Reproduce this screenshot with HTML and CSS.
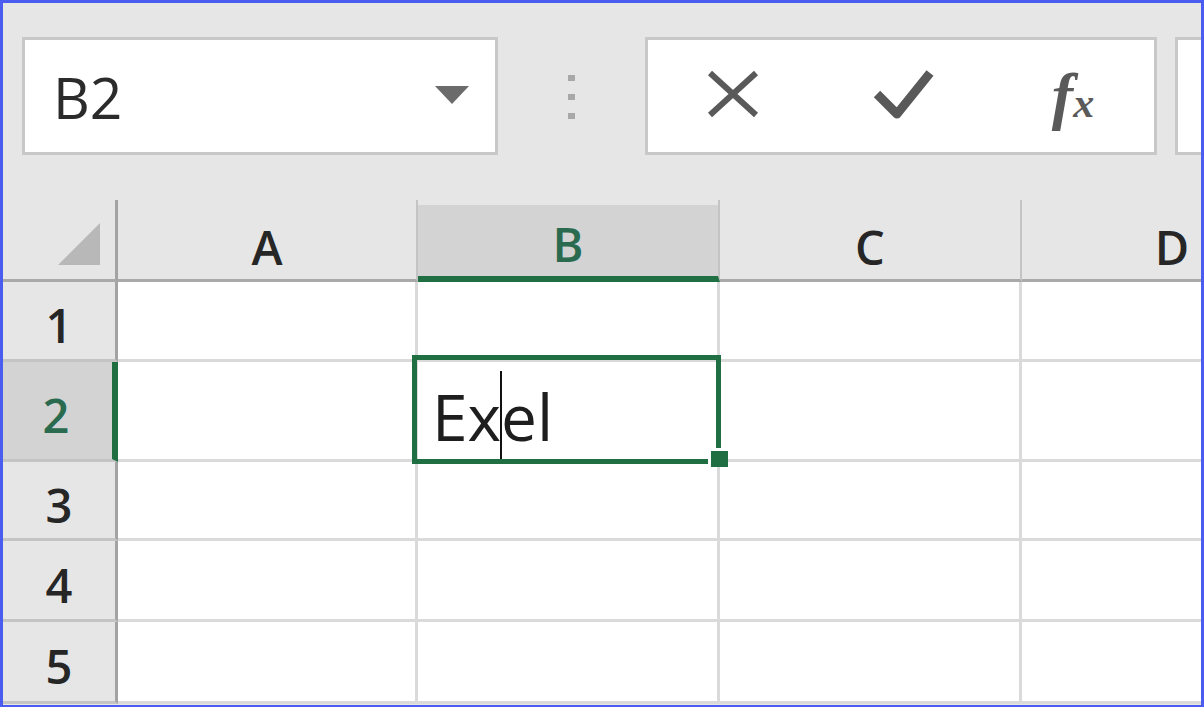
FILE: index.html
```html
<!DOCTYPE html>
<html>
<head>
<meta charset="utf-8">
<title>Excel</title>
<link rel="stylesheet" href="styles.css">
</head>
<body>
<div class="frame">
  <div class="toolbar">
    <div class="namebox">
      <span class="ref">B2</span>
      <svg class="dd" width="34" height="18" viewBox="0 0 34 18"><polygon points="0,0 34,0 17,18" fill="#6b6b6b"/></svg>
    </div>
    <div class="grip"><i></i><i></i><i></i></div>
    <div class="fbox">
      <span class="fbtn">
        <svg width="54" height="48" viewBox="0 0 54 48"><path d="M4 3 L50 45 M50 3 L4 45" stroke="#595959" stroke-width="6" fill="none"/></svg>
      </span>
      <span class="fbtn">
        <svg width="62" height="54" viewBox="0 0 62 54"><path d="M5 27 L25 47 L58 6" stroke="#595959" stroke-width="9" fill="none" stroke-linejoin="round"/></svg>
      </span>
      <span class="fbtn fx"><span class="f">f</span><span class="x">x</span></span>
    </div>
    <div class="input"></div>
  </div>
  <div class="sheet">
    <div class="corner"><svg width="42" height="42" viewBox="0 0 42 42"><polygon points="42,0 42,42 0,42" fill="#b8b8b8"/></svg></div>
    <div class="colh">A</div>
    <div class="colh sel">B</div>
    <div class="colh">C</div>
    <div class="colh">D</div>

    <div class="rowh">1</div>
    <div class="cell"></div><div class="cell"></div><div class="cell"></div><div class="cell"></div>

    <div class="rowh sel">2</div>
    <div class="cell"></div>
    <div class="cell active"><span class="val">Ex<span class="caret"></span>el</span><div class="selbox"></div><div class="handle"></div></div>
    <div class="cell"></div><div class="cell"></div>

    <div class="rowh">3</div>
    <div class="cell"></div><div class="cell"></div><div class="cell"></div><div class="cell"></div>

    <div class="rowh">4</div>
    <div class="cell"></div><div class="cell"></div><div class="cell"></div><div class="cell"></div>

    <div class="rowh">5</div>
    <div class="cell"></div><div class="cell"></div><div class="cell"></div><div class="cell"></div>
  </div>
</div>
</body>
</html>
```

FILE: styles.css
```css
html, body {
  margin: 0;
  padding: 0;
  background: #ffffff;
}

.frame {
  box-sizing: border-box;
  width: 1204px;
  height: 707px;
  border: 3px solid #4b5cf0;
  border-bottom-width: 2px;
  background: #e6e6e6;
  overflow: hidden;
  font-family: "Open Sans", "Noto Sans", sans-serif;
  color: #262626;
}

/* ---------- formula bar ---------- */
.toolbar {
  box-sizing: border-box;
  height: 197px;
  padding: 34px 0 0 19px;
  display: flex;
  align-items: flex-start;
}

.namebox {
  box-sizing: border-box;
  flex: none;
  width: 476px;
  height: 118px;
  background: #fff;
  border: 3px solid #c8c8c8;
  display: flex;
  align-items: center;
  justify-content: space-between;
  padding: 2px 26px 0 28px;
}

.ref {
  font-size: 57px;
  line-height: 1;
  color: #2b2b2b;
}

.dd {
  display: block;
  margin-bottom: 4px;
}

.grip {
  flex: none;
  width: 147px;
  height: 118px;
  display: flex;
  flex-direction: column;
  align-items: center;
  justify-content: flex-start;
  gap: 13px;
  padding-top: 38px;
  box-sizing: border-box;
}

.grip i {
  display: block;
  width: 7px;
  height: 6px;
  background: #a8a8a8;
}

.fbox {
  box-sizing: border-box;
  flex: none;
  width: 512px;
  height: 118px;
  background: #fff;
  border: 3px solid #c8c8c8;
  display: flex;
  align-items: center;
  padding: 0 0 4px 0;
}

.fbtn {
  flex: none;
  width: 170px;
  display: flex;
  justify-content: center;
  align-items: center;
}

.fbtn svg {
  display: block;
}

.fx {
  font-family: "Liberation Serif", "DejaVu Serif", serif;
  font-style: italic;
  font-weight: bold;
  color: #5a5a5a;
  align-items: baseline;
  padding-top: 4px;
}

.fx .f {
  font-size: 64px;
  line-height: 1;
}

.fx .x {
  font-size: 42px;
  line-height: 1;
  margin-left: 0;
}

.input {
  box-sizing: border-box;
  flex: none;
  width: 120px;
  height: 118px;
  margin-left: 18px;
  background: #fff;
  border: 3px solid #c8c8c8;
}

/* ---------- sheet ---------- */
.sheet {
  display: grid;
  grid-template-columns: 115px 300px 302px 302px 302px;
  grid-template-rows: 82px 80px 100px 79px 81px 82px;
  background: #fff;
}

.corner,
.colh {
  background: #e6e6e6;
  box-sizing: border-box;
  border-bottom: 3px solid #a9a9a9;
}

.corner {
  border-right: 3px solid #a3a3a3;
  display: flex;
  align-items: flex-end;
  justify-content: flex-end;
  padding: 0 15px 14px 0;
}

.corner svg {
  display: block;
}

.colh {
  border-right: 2px solid #c4c4c4;
  display: flex;
  align-items: center;
  justify-content: center;
  padding-top: 16px;
  font-size: 47px;
  font-weight: 600;
  line-height: 1;
}

.colh.sel {
  background: linear-gradient(#e6e6e6 5px, #d3d3d3 5px);
  color: #2a6b4f;
  border-bottom: 6px solid #1f6f43;
  padding-top: 13px;
}

.rowh {
  background: #e6e6e6;
  box-sizing: border-box;
  border-right: 3px solid #a3a3a3;
  border-bottom: 3px solid #c4c4c4;
  display: flex;
  align-items: center;
  justify-content: center;
  padding-top: 10px;
  font-size: 47px;
  font-weight: 600;
  line-height: 1;
}

.rowh.sel {
  background: #d3d3d3;
  color: #2a6b4f;
  border-right: 6px solid #1f6f43;
  padding-right: 3px;
}

.cell {
  box-sizing: border-box;
  border-right: 3px solid #dadada;
  border-bottom: 3px solid #dadada;
  background: #fff;
}

.cell.active {
  position: relative;
  padding: 9px 0 0 14px;
}

.val {
  font-size: 64px;
  line-height: 63px;
  color: #1e1e1e;
  white-space: nowrap;
}

.caret {
  display: inline-block;
  width: 2px;
  height: 88px;
  margin: 0 -1px;
  background: #111;
  vertical-align: -18px;
}

.selbox {
  position: absolute;
  left: -6px;
  top: -7px;
  right: -4px;
  bottom: -5px;
  border: 5px solid #1f6f43;
}

.handle {
  position: absolute;
  right: -11px;
  bottom: -8px;
  width: 17px;
  height: 16px;
  background: #1f6f43;
  border-top: 3px solid #fff;
  border-left: 3px solid #fff;
}
```
